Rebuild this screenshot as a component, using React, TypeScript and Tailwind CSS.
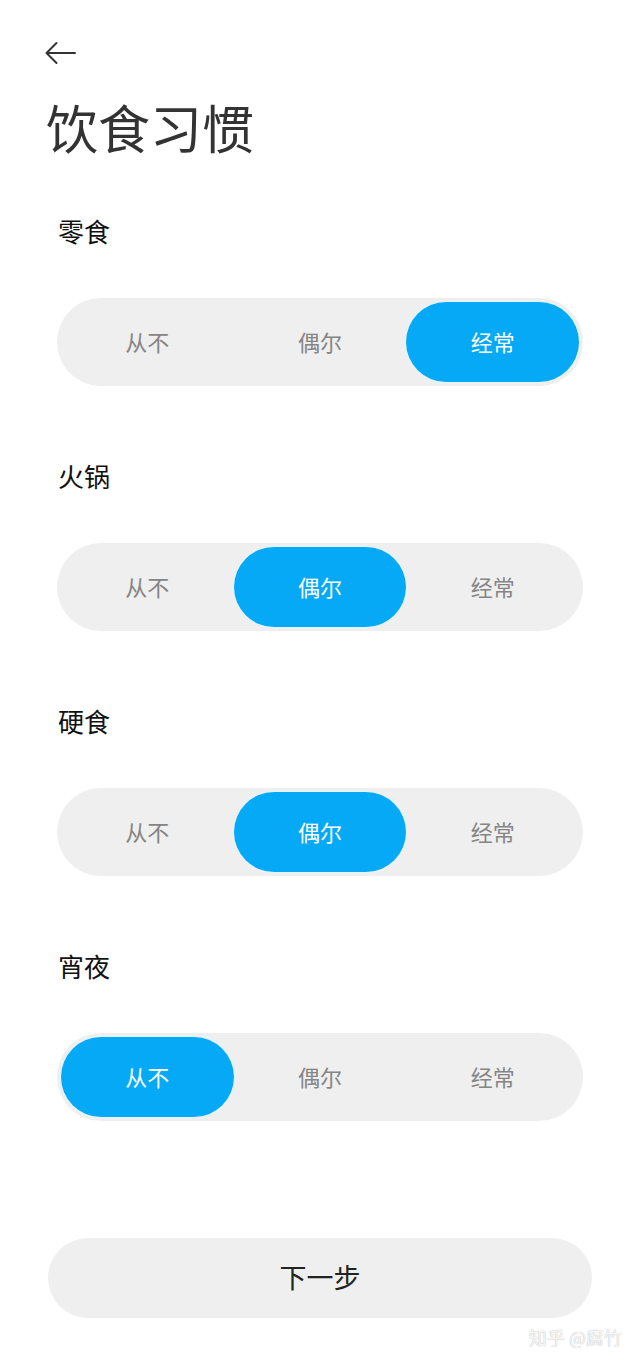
const options = ["从不", "偶尔", "经常"];

const habits = [
  { name: "零食", value: 2 },
  { name: "火锅", value: 1 },
  { name: "硬食", value: 1 },
  { name: "宵夜", value: 0 },
];

const font = { fontFamily: '"Noto Sans CJK SC", "Noto Sans", sans-serif' };

function Segmented({ value }: { value: number }) {
  return (
    <div className="flex h-[88px] rounded-full bg-[#efefef] p-1">
      {options.map((opt, i) => (
        <div
          key={opt}
          className={
            i === value
              ? "flex flex-1 items-center justify-center rounded-full bg-[#05a9f6] pb-[3px] text-[22px] leading-[22px] text-white shadow-[0_0_0_1px_#e3f5fd]"
              : "flex flex-1 items-center justify-center rounded-full pb-[3px] text-[22px] leading-[22px] text-[#858585]"
          }
        >
          {opt}
        </div>
      ))}
    </div>
  );
}

export default function App() {
  return (
    <div className="relative min-h-[1365px] w-[640px] bg-white" style={font}>
      <div className="px-[44px] pt-[41px]">
        <svg width="32" height="24" viewBox="0 0 32 24" fill="none" className="block">
          <path
            d="M31 12H2.5M12.5 2 2.5 12l10 10"
            stroke="#333"
            strokeWidth="2"
            strokeLinecap="round"
            strokeLinejoin="round"
          />
        </svg>
        <h1 className="mt-[36px] pl-[2px] text-[52px] leading-[52px] text-[#333]">饮食习惯</h1>
      </div>

      <div className="mt-[65px] px-[57px]">
        {habits.map((h, idx) => (
          <section key={h.name} className={idx === 0 ? "" : "mt-[77px]"}>
            <h2 className="pl-[1px] text-[26px] leading-[26px] text-[#111]">{h.name}</h2>
            <div className="mt-[54px]">
              <Segmented value={h.value} />
            </div>
          </section>
        ))}
      </div>

      <button className="mx-[48px] mt-[117px] flex h-[80px] w-[544px] items-center justify-center rounded-full bg-[#efefef] pb-[3px] text-[27px] leading-[27px] text-[#222]">
        下一步
      </button>

      <div className="absolute right-[18px] top-[1324px] text-[18px] leading-[26px] text-[#f7f7f7] [text-shadow:0_0_1px_#a8a8a8]">
        知乎 @腐竹
      </div>
    </div>
  );
}
